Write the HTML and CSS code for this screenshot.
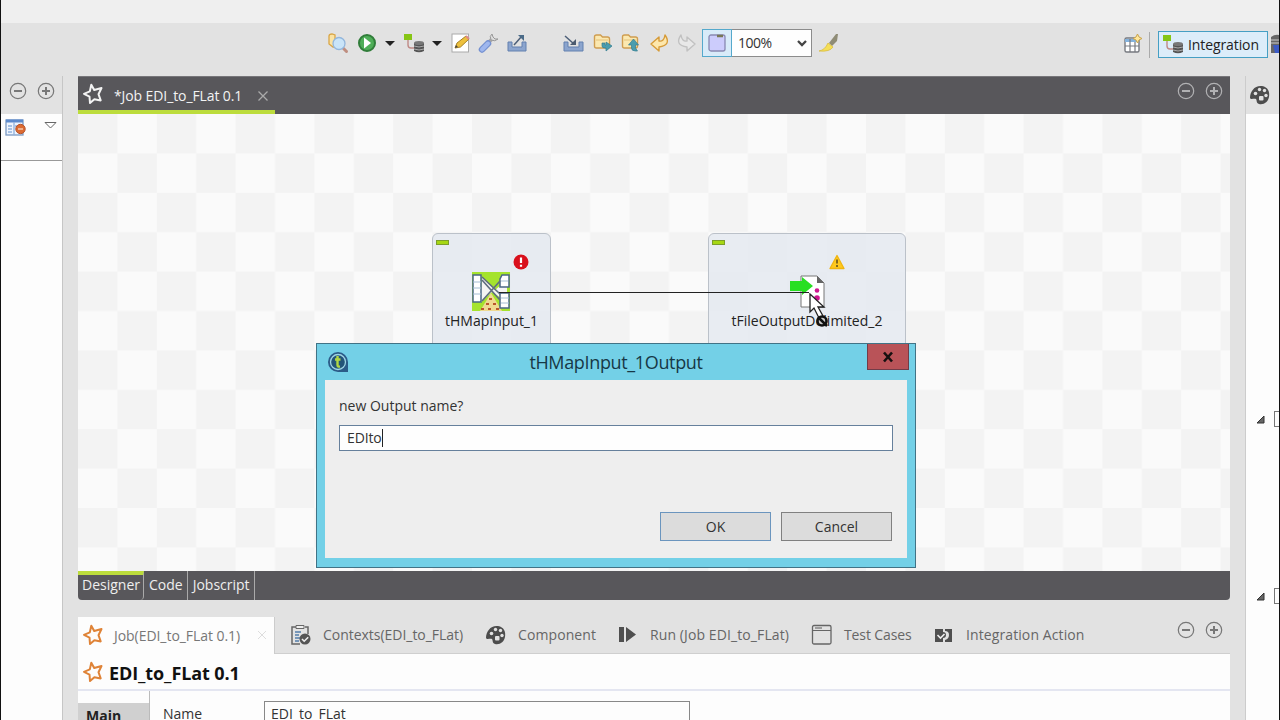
FILE: index.html
```html
<!DOCTYPE html>
<html lang="en">

<head>
    <meta charset="UTF-8">
    <meta name="viewport" content="width=device-width, initial-scale=1.0">
    <title>Job EDI_to_FLat 0.1</title>
    <link rel="stylesheet" href="styles.css">
</head>

<body>
    <!-- shared icons -->
    <svg class="defs">
        <symbol id="star" viewBox="0 0 22 22">
            <path d="M9.300 1.800l2.900 5.200 7.300-2-3 6.200 2.200 6.200-6.300-1.200-4.400 3.800-.5-6.400-5.500-2.800 5.800-2.400z" fill="none" stroke="currentColor" stroke-width="2" stroke-linejoin="round" />
        </symbol>
        <symbol id="minus" viewBox="0 0 18 18">
            <circle cx="9" cy="9" r="7.7" fill="none" stroke="currentColor" stroke-width="1.2" />
            <path d="M5 9h8" stroke="currentColor" stroke-width="2" />
        </symbol>
        <symbol id="plus" viewBox="0 0 18 18">
            <circle cx="9" cy="9" r="7.7" fill="none" stroke="currentColor" stroke-width="1.2" />
            <path d="M5 9h8M9 5v8" stroke="currentColor" stroke-width="2" />
        </symbol>
        <symbol id="flow" viewBox="0 0 22 22">
            <path d="M5 7v6q0 3 3 3h4" fill="none" stroke="#c08b87" stroke-width="1.4" />
            <rect x="1" y="2" width="8" height="6" fill="#86c515" />
            <path d="M11 11v8q5 2.5 10 0v-8z" fill="#555" />
            <ellipse cx="16" cy="11" rx="5" ry="2" fill="#777" />
            <path d="M11 14q5 2 10 0M11 17q5 2 10 0" fill="none" stroke="#aaa" />
        </symbol>
        <symbol id="palette" viewBox="0 0 22 22">
            <path d="M1 14C1 7 6 1 13 2c6 1 8 6 7 11-1 5-5 8-10 7-3-1-2-4-3-5-2-1-5 1-6-1z" fill="#4d4d4d" />
            <circle cx="6.5" cy="9.500" r="1.8" fill="#e2e2e2" />
            <circle cx="10.500" cy="5.500" r="1.7" fill="#e2e2e2" />
            <circle cx="15.500" cy="6.500" r="1.7" fill="#e2e2e2" />
            <circle cx="17" cy="11.500" r="1.7" fill="#e2e2e2" />
            <rect x="10" y="12" width="4.500" height="4.500" rx="1" fill="#e2e2e2" />
        </symbol>
        <symbol id="folder" viewBox="0 0 22 22">
            <path d="M2.500 5q0-2 2-2h4l2 2h5q2 0 2 2v7q0 2-2 2h-11q-2 0-2-2z" fill="#fbe8b0" stroke="#cf9d50" stroke-width="1.4" />
            <path d="M4 8h12" stroke="#e3c27b" />
        </symbol>
    </svg>

    <div class="menubar"></div>

    <div class="toolbar">
        <svg class="icon search" viewBox="0 0 22 22">
            <path d="M2 4q0-2 3-2l3 1v4l3 1v7H6L2 12z" fill="#fbe3a4" stroke="#d9a646" stroke-width="1.3" />
            <path d="M16 16l3.500 3.500" stroke="#bf8e80" stroke-width="3" stroke-linecap="round" />
            <circle cx="12" cy="11.500" r="6" fill="#c9e4f8" stroke="#93b6dc" stroke-width="1.3" />
        </svg>
        <svg class="icon run" viewBox="0 0 22 22">
            <circle cx="11" cy="11" r="8" fill="#4fae58" stroke="#317d3a" stroke-width="2" />
            <path d="M8 5.500l7 5.500-7 5.500z" fill="#fff" />
        </svg>
        <span class="arrow"></span>
        <svg class="icon"><use href="#flow" /></svg>
        <span class="arrow"></span>
        <svg class="icon" viewBox="0 0 22 22">
            <rect x="2" y="2" width="16.500" height="18" fill="#fff" stroke="#aaa" />
            <path d="M5 16l2-5 9-7 3 3-8.500 8z" fill="#edc03d" stroke="#a68123" />
            <path d="M5 16l1-3 2 2z" fill="#444" />
            <path d="M16 4l3 3" stroke="#d88" stroke-width="2" />
        </svg>
        <svg class="icon edit" viewBox="0 0 22 22">
            <path d="M9 12l6-6" stroke="#a7a7a7" stroke-width="3.500" />
            <path d="M14 2q-3 2-1 6 4 2 7-1l-3 0-2-2z" fill="#ddd" stroke="#999" />
            <path d="M4 17.500l6-6" stroke="#7490d1" stroke-width="6.500" stroke-linecap="round" />
            <path d="M4 17.500l6-6" stroke="#9fb7ee" stroke-width="4" stroke-linecap="round" />
        </svg>
        <svg class="icon edit" viewBox="0 0 22 22">
            <path d="M2 10h4v5h10v-5h4v9H2z" fill="#8ca5ce" stroke="#6380af" />
            <path d="M8 13l8-9" stroke="#4d5f78" stroke-width="1.5" />
            <path d="M12 3h6v6z" fill="#4b6b88" />
        </svg>
        <svg class="icon import" viewBox="0 0 22 22">
            <path d="M1 10h4v5h11v-5h4v9H1z" fill="#8ca5ce" stroke="#6380af" />
            <path d="M2 4l9 8" stroke="#4d5f78" stroke-width="1.5" />
            <path d="M13 7v6H7z" fill="#4b5b70" />
        </svg>
        <svg class="icon load" viewBox="0 0 22 22">
            <use href="#folder" />
            <path d="M10 11v3q0 2 3 2h1v3l6-5-6-4v3h-1v-2z" fill="#4a9dae" stroke="#347d91" stroke-width=".7" />
        </svg>
        <svg class="icon edit" viewBox="0 0 22 22">
            <use href="#folder" />
            <path d="M13.500 7l-5 6h3v3q0 3 4 3h2l-2-3v-3h3z" fill="#4a9dae" stroke="#347d91" stroke-width=".7" />
        </svg>
        <svg class="icon load" viewBox="0 0 22 22">
            <path d="M2 12l8-7v4q5 1 6-6 7 10-6 12v4z" fill="#fde7ac" stroke="#d69b38" stroke-width="1.4" stroke-linejoin="round" />
        </svg>
        <svg class="icon redo" viewBox="0 0 22 22">
            <path d="M20 12l-8-7v4Q7 10 6 3q-7 10 6 12v4z" fill="#e8e8e8" stroke="#c1c1c1" stroke-width="1.4" stroke-linejoin="round" />
        </svg>
        <div class="toggle">
            <svg width="20" height="20" viewBox="0 0 20 20">
                <rect x="2" y="2" width="16" height="16" rx="2" fill="#ccccfc" stroke="#8989b1" stroke-width="1.3" />
                <path d="M10 3h6" stroke="#777755" stroke-width="2.500" />
            </svg>
        </div>
        <div class="zoom">
            <span>100%</span>
            <svg width="12" height="9" viewBox="0 0 12 9"><path d="M2 2l4 4 4-4" fill="none" stroke="#444" stroke-width="2.300" /></svg>
        </div>
        <svg class="icon brush" viewBox="0 0 22 22">
            <path d="M11 11l7-9 2 0-1 7-5 5z" fill="#8f8c76" />
            <path d="M1 19q6-1 9-8l5 4q-3 5-14 4z" fill="#f5df57" stroke="#d9bd3d" stroke-width=".8" />
        </svg>

        <div class="perspectives">
            <svg class="icon" viewBox="0 0 22 22">
                <rect x="3" y="5" width="14" height="14" rx="1.500" fill="#fff" stroke="#777a80" stroke-width="1.400" />
                <path d="M3 6h14v3H3z" fill="#84b2dc" />
                <path d="M3 13h14M8 6v13M13 9v10" stroke="#777a80" stroke-width="1.200" />
                <path d="M15.500 1l1.500 3 3 1.500-3 1.500-1.500 3L14 7l-3-1.500L14 4z" fill="#ffe79a" stroke="#c9a34c" />
            </svg>
            <div class="integration">
                <svg class="icon"><use href="#flow" /></svg>
                <span>Integration</span>
            </div>
            <svg class="cut" viewBox="0 0 8 20"><path d="M0 3q4-3 8-2v18H0z" fill="#666" /><path d="M0 9h8M0 6h8" stroke="#ccc" /><path d="M2 11h6v8H4z" fill="#3c5bc5" /></svg>
        </div>
    </div>

    <div class="workbench">
        <aside class="left">
            <div class="view-head">
                <svg class="round"><use href="#minus" /></svg>
                <svg class="round"><use href="#plus" /></svg>
            </div>
            <div class="view-tools">
                <svg width="22" height="18" viewBox="0 0 22 18">
                    <rect x="1" y="1" width="17" height="15" fill="#eef4fd" stroke="#7b9ac4" stroke-width="1.300" />
                    <path d="M1 2h17" stroke="#5c8acd" stroke-width="3" />
                    <path d="M3 7h4M3 10h4M3 13h4M10 7h4M9 3v13" stroke="#8fb1de" stroke-width="1.300" />
                    <circle cx="15.500" cy="10" r="4.700" fill="#dc6b32" stroke="#b4522a" />
                    <path d="M13 10h5" stroke="#f6c9ae" stroke-width="1.500" />
                </svg>
                <svg width="13" height="9" viewBox="0 0 13 9"><path d="M1 1.500h11L6.500 7z" fill="#fff" stroke="#666" /></svg>
            </div>
        </aside>

        <main class="center">
            <section class="editor">
                <div class="editor-head">
                    <div class="editor-tab">
                        <svg class="star"><use href="#star" /></svg>
                        <span>*Job EDI_to_FLat 0.1</span>
                        <svg class="close" viewBox="0 0 12 12"><path d="M1.500 1.500l9 9M10.500 1.500l-9 9" stroke="#aaa" stroke-width="1.300" /></svg>
                    </div>
                    <div class="rounds">
                        <svg class="round"><use href="#minus" /></svg>
                        <svg class="round"><use href="#plus" /></svg>
                    </div>
                </div>

                <div class="canvas">
                    <svg class="checker" width="1152" height="457">
                        <pattern id="tiles" width="78.800" height="78.800" patternUnits="userSpaceOnUse">
                            <path d="M0 0h39.400v39.400H0zM39.400 39.400h39.400v39.400H39.400z" fill="#f3f3f3" />
                        </pattern>
                        <rect width="1152" height="457" fill="url(#tiles)" />
                    </svg>
                    <div class="node input-node">
                        <span class="mark"></span>
                        <svg class="badge" viewBox="0 0 16 16"><circle cx="8" cy="8" r="7.500" fill="#d9101c" /><path d="M8 3.500v5.500M8 10.700v2" stroke="#fff" stroke-width="2.200" /></svg>
                        <svg class="pic" width="40" height="40" viewBox="0 0 40 40">
                            <rect x="1" width="38" height="39" fill="#a5e32d" />
                            <path d="M11 5l13 13L36 8v22L21 20 9 31z" fill="#f4f4f4" />
                            <path d="M12 0h17l-9 13z" fill="#a5e32d" />
                            <path d="M9 39l11-18 11 18z" fill="#efd991" />
                            <g fill="#fff" stroke="#4b6786" stroke-width="1.500">
                                <path d="M2 3h8v27H2zM31 3h7v12h-9V7zM30 21h8v15h-9V22z" />
                            </g>
                            <path d="M2 10h8M2 16h8M2 22h8M30 26h8M30 31h8M30 9h7" stroke="#a4bdd3" />
                            <path d="M11 8l18 20M11 29L29 9M11 5l18 17" fill="none" stroke="#606d80" stroke-width="1.700" />
                            <path d="M18 27h3M15 32h3M22 32h3M10 37h3M17 37h3M25 37h3" stroke="#b9562c" stroke-width="2" />
                        </svg>
                        <span class="name">tHMapInput_1</span>
                    </div>
                    <div class="node output-node">
                        <span class="mark"></span>
                        <svg class="badge" viewBox="0 0 16 16"><path d="M8 1.500L15 14.500H1z" fill="#ffc91f" stroke="#f0b510" stroke-width="1.300" stroke-linejoin="round" /><path d="M8 5.500v4M8 11v2" stroke="#65501c" stroke-width="1.600" /></svg>
                        <svg class="pic" width="40" height="40" viewBox="0 0 40 40">
                            <path d="M14 4h16l7 7v24H14z" fill="#fff" stroke="#777" />
                            <path d="M30 4v7h7z" fill="#666" />
                            <circle cx="30" cy="18.500" r="2.300" fill="#cf168f" />
                            <circle cx="30" cy="26" r="2.800" fill="#cf168f" />
                            <path d="M3 9h12V5l11 9-11 9v-4H3z" fill="#27df22" />
                        </svg>
                        <span class="name">tFileOutputDelimited_2</span>
                    </div>
                    <div class="link"></div>
                    <svg class="pointer" width="24" height="38" viewBox="0 0 24 38">
                        <path d="M2 1v18l4-4 5 10 4-2-5-9h6z" fill="#fff" stroke="#222" stroke-width="1.300" />
                        <circle cx="14" cy="28" r="4.500" fill="#ccc" stroke="#111" stroke-width="2.600" />
                        <path d="M10 24l9 9" stroke="#111" stroke-width="2.500" />
                    </svg>
                </div>

                <div class="page-tabs">
                    <span class="page active">Designer</span>
                    <span class="page">Code</span>
                    <span class="page">Jobscript</span>
                </div>
            </section>

            <section class="properties">
                <div class="view-tabs">
                    <div class="view-tab current">
                        <svg class="star"><use href="#star" /></svg>
                        <span>Job(EDI_to_FLat 0.1)</span>
                        <svg class="close" viewBox="0 0 12 12"><path d="M2 2l8 8M10 2l-8 8" stroke="#ddd" /></svg>
                    </div>
                    <div class="view-tab contexts">
                        <svg class="icon" viewBox="0 0 22 22">
                            <path d="M6 3H2v17h8M15 3h3v7" fill="none" stroke="#666" stroke-width="1.500" />
                            <path d="M6 1.500h8v3H6z" fill="#eee" stroke="#666" />
                            <path d="M5 8h6M5 11h4M5 14h5M5 17h4" stroke="#537eab" stroke-width="1.400" />
                            <circle cx="15" cy="15" r="5.500" fill="#555" />
                            <path d="M12 15l2.200 2.200 4-4" fill="none" stroke="#eee" stroke-width="1.600" />
                        </svg>
                        <span>Contexts(EDI_to_FLat)</span>
                    </div>
                    <div class="view-tab component">
                        <svg class="icon"><use href="#palette" /></svg>
                        <span>Component</span>
                    </div>
                    <div class="view-tab runner">
                        <svg class="icon" viewBox="0 0 22 22"><path d="M2 3h5v15H2zM9 3l10 7.500L9 18z" fill="#4f4f4f" /></svg>
                        <span>Run (Job EDI_to_FLat)</span>
                    </div>
                    <div class="view-tab tests">
                        <svg class="icon" viewBox="0 0 22 22"><rect x="1.500" y="1.500" width="18.500" height="18.500" rx="1.500" fill="none" stroke="#666" stroke-width="1.300" /><path d="M2 6.500h18" stroke="#666" /><path d="M4 4h7" stroke="#777" stroke-width="1.300" /></svg>
                        <span>Test Cases</span>
                    </div>
                    <div class="view-tab action">
                        <svg class="icon" viewBox="0 0 22 22"><path d="M2 5h8v3q3 0 3 3t-3 3v4H2z" fill="#4f4f4f" /><path d="M12 5h7v13h-7v-2q4-1 4-5t-4-4z" fill="#4f4f4f" /><path d="M4.500 11l3 3 4-4" fill="none" stroke="#eee" stroke-width="1.600" /></svg>
                        <span>Integration Action</span>
                    </div>
                    <div class="rounds">
                        <svg class="round"><use href="#minus" /></svg>
                        <svg class="round"><use href="#plus" /></svg>
                    </div>
                </div>
                <div class="title">
                    <svg class="star"><use href="#star" /></svg>
                    <h1>EDI_to_FLat 0.1</h1>
                </div>
                <div class="form">
                    <div class="side"><div class="side-item">Main</div></div>
                    <label>Name</label>
                    <div class="field">EDI_to_FLat</div>
                </div>
            </section>
        </main>

        <aside class="right">
            <div class="view-head">
                <svg class="icon"><use href="#palette" /></svg>
            </div>
            <div class="tree">
                <div class="tree-row"><svg width="9" height="9"><path d="M8 1v7H1z" fill="#666" stroke="#333" /></svg><span class="box"></span></div>
                <div class="tree-row"><svg width="9" height="9"><path d="M8 1v7H1z" fill="#666" stroke="#333" /></svg><span class="box"></span></div>
            </div>
        </aside>
    </div>

    <div class="dialog">
        <div class="dialog-title">
            <svg class="logo" width="22" height="22" viewBox="0 0 22 22">
                <path d="M11 1a10 10 0 1 0 0 20h10V11A10 10 0 0 0 11 1z" fill="#2b5b88" />
                <circle cx="11" cy="11" r="7.500" fill="#235478" stroke="#9fd5e4" stroke-width="1.300" />
                <path d="M10.500 5v9q0 2 2.500 1.500M8 8.500h5.500" fill="none" stroke="#b2d744" stroke-width="2.400" />
            </svg>
            <span>tHMapInput_1Output</span>
            <div class="dialog-close"><svg width="12" height="12" viewBox="0 0 12 12"><path d="M2 1.500l8 9M10 1.500l-8 9" stroke="#171010" stroke-width="2.600" /></svg></div>
        </div>
        <div class="dialog-body">
            <label>new Output name?</label>
            <div class="text-input">EDIto<span class="caret"></span></div>
            <div class="buttons">
                <button class="ok">OK</button>
                <button>Cancel</button>
            </div>
        </div>
    </div>
</body>

</html>
```

FILE: styles.css
```css
* {
    margin: 0;
    padding: 0;
    box-sizing: border-box;
}

body {
    position: relative;
    display: flex;
    flex-direction: column;
    width: 1280px;
    height: 720px;
    overflow: hidden;
    background: #e2e2e2;
    border-left: 1px solid #111;
    border-right: 1px solid #111;
    font-family: "Open Sans", "Noto Sans", sans-serif;
    font-size: 14px;
    color: #333;
}

svg {
    display: block;
    flex: none;
}

span,
label {
    white-space: nowrap;
}

.defs {
    position: absolute;
    width: 0;
    height: 0;
}

.icon {
    width: 22px;
    height: 22px;
}

.star {
    width: 22px;
    height: 22px;
}

.round {
    width: 18px;
    height: 18px;
}

.close {
    width: 12px;
    height: 12px;
}

.menubar {
    height: 23px;
    background: #efefef;
}

/* toolbar */
.toolbar {
    display: flex;
    align-items: center;
    height: 53px;
    padding: 0 0 13px 326px;
}

.run {
    margin-left: 7px;
}

.arrow {
    margin: 0 8px 0 7px;
    border: 5px solid transparent;
    border-top-color: #222;
    border-bottom: 0;
}

.edit {
    margin-left: 6px;
}

.import {
    margin-left: 35px;
}

.load {
    margin-left: 7px;
}

.redo {
    margin-left: 4px;
}

.brush {
    margin-left: 6px;
}

.toggle {
    display: flex;
    align-items: center;
    justify-content: center;
    width: 30px;
    height: 28px;
    margin-left: 5px;
    background: #d8ebf9;
    border: 1px solid #55a9cc;
}

.zoom {
    display: flex;
    align-items: center;
    justify-content: space-between;
    width: 80px;
    height: 28px;
    padding: 0 3px 2px 6px;
    background: #fefefe;
    border: 1px solid #8c8c8c;
    border-left: 0;
    letter-spacing: -0.5px;
}

.zoom svg {
    margin-top: 3px;
}

.perspectives {
    display: flex;
    align-items: center;
    margin: 2px 0 0 auto;
}

.integration {
    display: flex;
    align-items: center;
    gap: 4px;
    width: 110px;
    height: 27px;
    margin: 0 3px 0 14px;
    padding-left: 3px;
    position: relative;
    background: #dcedfa;
    border: 1px solid #459fc4;
    color: #222;
}

.integration span {
    letter-spacing: -0.1px;
}

.integration::before {
    content: "";
    position: absolute;
    left: -10px;
    top: 0;
    height: 26px;
    border-left: 1px solid #aaa;
}

.cut {
    width: 8px;
    height: 20px;
}

/* workbench */
.workbench {
    display: flex;
    flex: 1;
    min-height: 0;
}

.left {
    width: 62px;
    margin-right: 15px;
    background: #fdfdfd;
    border-right: 1px solid #c6c6c6;
}

.view-head {
    display: flex;
    align-items: center;
    height: 38px;
    background: #e2e2e2;
}

.left .view-head {
    gap: 10px;
    padding: 0 0 9px 8px;
    color: #777;
}

.view-tools {
    display: flex;
    justify-content: space-between;
    align-items: flex-start;
    height: 47px;
    padding: 5px 5px 5px 4px;
    border-bottom: 1px solid #999;
}

.view-tools svg:last-child {
    margin-top: 2px;
}

.center {
    display: flex;
    flex-direction: column;
    width: 1152px;
}

.editor {
    height: 524px;
}

.editor-head {
    display: flex;
    justify-content: space-between;
    height: 38px;
    background: #58575b;
    border-top: 1px solid #77767a;
    color: #f3f3f3;
}

.editor-tab {
    display: flex;
    align-items: center;
    width: 197px;
    padding-left: 4px;
    border-bottom: 4px solid #bcdc3c;
}

.editor-tab span,
.current span {
    width: 128px;
    margin: 0 14px 0 10px;
    letter-spacing: -0.1px;
}

.editor-tab .close {
    margin: 5px 0 0 1px;
}

.editor-tab span {
    margin-top: 3px;
}

.rounds {
    display: flex;
    gap: 10px;
    padding: 5px 7px 0 0;
    color: #b1b1b3;
}

.canvas {
    position: relative;
    height: 457px;
    overflow: hidden;
    background: #fafafa;
}

.node {
    position: absolute;
    top: 119px;
    height: 140px;
    background: rgba(227, 232, 240, 0.8);
    border: 1px solid #bbc1c9;
    border-radius: 6px;
    color: #222;
}

.input-node {
    left: 354px;
    width: 119px;
}

.output-node {
    left: 630px;
    width: 198px;
}

.mark {
    position: absolute;
    left: 3px;
    top: 6px;
    width: 13px;
    height: 5px;
    background: #a6d713;
    border: 1px solid #7c9e2b;
}

.badge {
    position: absolute;
    top: 20px;
    left: 80px;
    width: 16px;
    height: 16px;
}

.output-node .badge {
    left: 120px;
}

.pic {
    position: absolute;
    top: 38px;
    left: 38px;
}

.output-node .pic {
    left: 78px;
}

.name {
    position: absolute;
    top: 77px;
    left: 0;
    right: 0;
    text-align: center;
}

.link {
    position: absolute;
    left: 421px;
    top: 178px;
    width: 310px;
    height: 1px;
    background: #222;
}

.pointer {
    position: absolute;
    left: 730px;
    top: 179px;
}

.page-tabs {
    display: flex;
    height: 29px;
    background: #58575b;
    border-radius: 0 0 4px 4px;
    color: #eee;
}

.page {
    padding: 4px 4px 0 5px;
    border-right: 1px solid #aaa;
}

.active {
    padding: 0 3px 0 4px;
    border-top: 4px solid #bcdc3c;
    border-radius: 0 0 4px 0;
}

/* bottom views */
.properties {
    flex: 1;
    margin-top: 17px;
    background: #fdfdfd;
}

.view-tabs {
    display: flex;
    height: 37px;
    background: #e2e2e2;
    border-bottom: 1px solid #cfcfcf;
    color: #666;
}

.view-tab {
    display: flex;
    align-items: center;
    gap: 11px;
    padding-bottom: 1px;
}

.current {
    gap: 0;
    width: 197px;
    height: 37px;
    padding-left: 4px;
    background: #fdfdfd;
    border-right: 1px solid #ccc;
    color: #777;
}

.current span {
    letter-spacing: -0.05px;
}

.properties .star {
    color: #df8337;
}

.contexts {
    width: 196px;
    padding-left: 15px;
    letter-spacing: -0.03px;
}

.component {
    width: 132px;
    padding-left: 14px;
    letter-spacing: 0.1px;
}

.runner {
    width: 195px;
    padding-left: 14px;
    letter-spacing: 0.1px;
}

.tests {
    width: 122px;
    padding-left: 13px;
    letter-spacing: -0.1px;
}

.action {
    padding-left: 13px;
    letter-spacing: 0.1px;
}

.view-tabs .rounds {
    margin-left: auto;
    padding-top: 4px;
    color: #777;
}

.title {
    display: flex;
    align-items: center;
    gap: 5px;
    height: 37px;
    padding-left: 4px;
    border-bottom: 2px solid #e4e6f1;
}

h1 {
    padding-top: 2px;
    font-size: 18px;
    color: #111;
    letter-spacing: -0.1px;
}

.form {
    display: flex;
    height: 29px;
    overflow: hidden;
}

.side {
    width: 72px;
    padding-top: 12px;
    border-right: 1px solid #bbb;
}

.side-item {
    height: 30px;
    padding: 3px 0 0 8px;
    background: #d0d0d0;
    font-weight: bold;
    color: #222;
}

.form label {
    width: 114px;
    padding: 13px 0 0 13px;
}

.field {
    width: 426px;
    height: 30px;
    margin-top: 10px;
    padding: 2px 6px;
    border: 1px solid #888;
}

.right {
    width: 34px;
    margin-left: 15px;
    background: #fdfdfd;
    border-left: 1px solid #ccc;
}

.right .view-head {
    padding-left: 3px;
}

.tree {
    display: flex;
    flex-direction: column;
    gap: 161px;
    padding-top: 297px;
}

.tree-row {
    display: flex;
    align-items: center;
    justify-content: space-between;
    height: 16px;
    padding-left: 10px;
}

.box {
    width: 5px;
    height: 16px;
    border: 1px solid #777;
    border-right: 0;
}

/* new output dialog */
.dialog {
    position: absolute;
    left: 315px;
    top: 343px;
    width: 600px;
    height: 225px;
    padding: 0 8px 9px;
    background: #73d0e7;
    border: 1px solid #417386;
}

.dialog-title {
    display: flex;
    align-items: center;
    justify-content: center;
    position: relative;
    height: 36px;
    font-size: 18px;
    letter-spacing: -0.35px;
    color: #173846;
}

.logo {
    position: absolute;
    left: 2px;
    top: 7px;
}

.dialog-close {
    position: absolute;
    right: -2px;
    top: 0;
    display: flex;
    align-items: center;
    justify-content: center;
    width: 42px;
    height: 26px;
    background: #b95358;
    border: 1px solid #723c48;
    border-top: 0;
}

.dialog-body {
    display: flex;
    flex-direction: column;
    height: 178px;
    padding: 16px 14px;
    background: #eee;
}

.dialog-body label {
    height: 29px;
}

.text-input {
    display: flex;
    align-items: center;
    height: 26px;
    padding: 0 0 1px 7px;
    background: #fefefe;
    border: 1px solid #66809c;
    letter-spacing: -0.15px;
}

.caret {
    width: 1px;
    height: 18px;
    background: #222;
}

.buttons {
    display: flex;
    justify-content: flex-end;
    gap: 10px;
    margin-top: 61px;
    padding-right: 1px;
}

button {
    width: 111px;
    height: 29px;
    background: #dcdcdc;
    border: 1px solid #808080;
    font: inherit;
    color: inherit;
}

.ok {
    border-color: #6b95be;
}
```
